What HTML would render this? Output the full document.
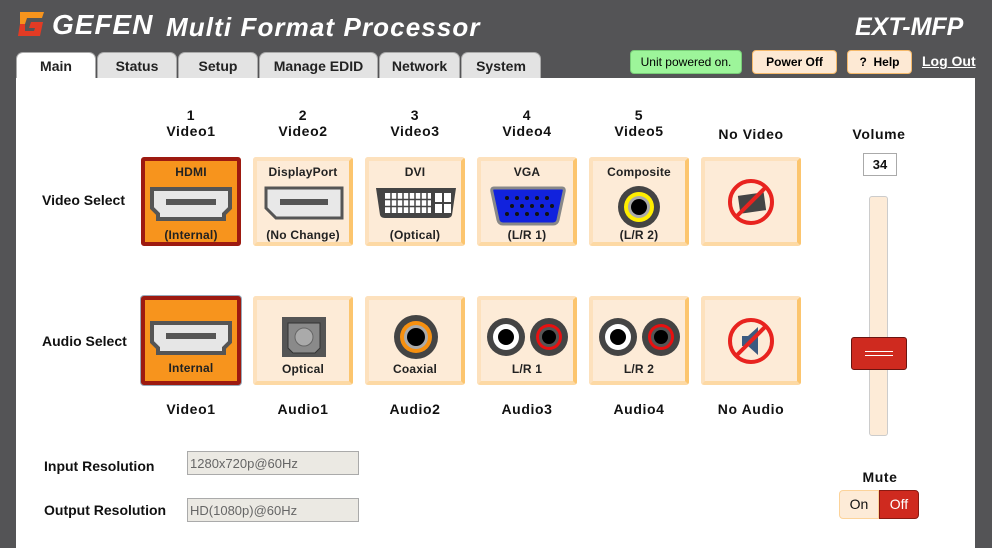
<!DOCTYPE html>
<html><head><meta charset="utf-8"><style>
*{margin:0;padding:0;box-sizing:border-box}
body{width:992px;height:541px;background:#545456;font-family:"Liberation Sans",Arial,sans-serif;position:relative;overflow:hidden}
.a{position:absolute}
.t{position:absolute;top:52px;height:26px;background:#e3e3e3;border:1px solid #aaa;border-bottom:none;border-radius:7px 7px 0 0;font:bold 14px "Liberation Sans",sans-serif;color:#222;text-align:center;line-height:26px}
.panel{position:absolute;left:16px;top:78px;width:959px;height:470px;background:#fff}
.tile{position:absolute;width:100px;height:89px;background:#fdebd7;border:4px solid #fde1bd;border-right-color:#fcc56e;border-bottom-color:#fdd9a4;border-radius:3px}
.sel{background:#f7941d;border:4px solid #9d1a10}
.tl{position:absolute;left:0;width:92px;text-align:center;font:bold 12px "Liberation Sans",sans-serif;color:#222;letter-spacing:0.2px}
.lab{position:absolute;font:bold 14px "Liberation Sans",sans-serif;color:#111;text-align:center;width:100px;letter-spacing:0.6px}
.btn{position:absolute;top:50px;height:24px;border-radius:4px;font:bold 12px "Liberation Sans",sans-serif;text-align:center;line-height:22px}
svg{position:absolute}
</style></head><body>
<svg style="left:16px;top:8px" width="32" height="32" viewBox="0 0 32 32"><path d="M4 4 H28 L26 10 H11 L9 16 L4 16 Z" fill="#f7941d"/><path d="M9 16 L4 16 L2 28 H24 L27 14 H15 L13 20 H19 L18 23 H9 Z" fill="#e33b24"/></svg>
<div class="a" style="left:52px;top:9px;font:italic bold 28px 'Liberation Sans',sans-serif;color:#fff;letter-spacing:1px">GEFEN</div>
<div class="a" style="left:166px;top:12px;font:italic bold 26px 'Liberation Sans',sans-serif;color:#fff;letter-spacing:1.1px">Multi Format Processor</div>
<div class="a" style="left:855px;top:13px;font:italic bold 25px 'Liberation Sans',sans-serif;color:#fff">EXT-MFP</div>
<div class="t" style="left:16px;width:80px;background:#fff;height:27px">Main</div>
<div class="t" style="left:97px;width:80px">Status</div>
<div class="t" style="left:178px;width:80px">Setup</div>
<div class="t" style="left:259px;width:119px">Manage EDID</div>
<div class="t" style="left:379px;width:81px">Network</div>
<div class="t" style="left:461px;width:80px">System</div>
<div class="btn" style="left:630px;width:112px;background:#9df59a;border:1px solid #7c7;font-weight:normal">Unit powered on.</div>
<div class="btn" style="left:752px;width:85px;background:#fde9d4;border:1px solid #f5b96a">Power Off</div>
<div class="btn" style="left:847px;width:65px;background:#fde9d4;border:1px solid #f5b96a">?&nbsp; Help</div>
<div class="a" style="left:922px;top:53px;font:bold 14px 'Liberation Sans',sans-serif;color:#fff;text-decoration:underline">Log Out</div>
<div class="panel"></div>

<div class="lab" style="left:141px;top:107px">1<br>Video1</div>
<div class="lab" style="left:253px;top:107px">2<br>Video2</div>
<div class="lab" style="left:365px;top:107px">3<br>Video3</div>
<div class="lab" style="left:477px;top:107px">4<br>Video4</div>
<div class="lab" style="left:589px;top:107px">5<br>Video5</div>
<div class="lab" style="left:701px;top:126px">No Video</div>
<div class="lab" style="left:829px;top:126px">Volume</div>
<div class="a" style="left:42px;top:192px;font:bold 14px 'Liberation Sans';color:#111">Video Select</div>
<div class="a" style="left:42px;top:333px;font:bold 14px 'Liberation Sans';color:#111">Audio Select</div>
<div class="lab" style="left:141px;top:401px">Video1</div>
<div class="lab" style="left:253px;top:401px">Audio1</div>
<div class="lab" style="left:365px;top:401px">Audio2</div>
<div class="lab" style="left:477px;top:401px">Audio3</div>
<div class="lab" style="left:589px;top:401px">Audio4</div>
<div class="lab" style="left:701px;top:401px">No Audio</div>

<div class="tile sel" style="left:141px;top:157px"><div class="tl" style="top:4px">HDMI</div><div class="tl" style="top:67px">(Internal)</div>
<svg style="left:4px;top:25px" width="84" height="36"><path d="M3 3 H81 V22 L75 28 V33 H9 V28 L3 22 Z" fill="#e6e6e6" stroke="#555" stroke-width="4"/><rect x="17" y="13" width="50" height="6" fill="#555"/></svg></div>
<div class="tile" style="left:253px;top:157px"><div class="tl" style="top:4px">DisplayPort</div><div class="tl" style="top:67px">(No Change)</div>
<svg style="left:7px;top:25px" width="80" height="34"><path d="M2 2 H78 V32 H12 L2 22 Z" fill="#e8e8e8" stroke="#555" stroke-width="3"/><rect x="16" y="13" width="48" height="6" fill="#555"/></svg></div>
<div class="tile" style="left:365px;top:157px"><div class="tl" style="top:4px">DVI</div><div class="tl" style="top:67px">(Optical)</div>
<svg style="left:6px;top:26px" width="82" height="32"><path d="M1 1 H81 L77 28 Q76 31 72 31 H10 Q6 31 5 28 Z" fill="#444"/><rect x="10" y="6" width="46" height="20" fill="#fff"/><g stroke="#444" stroke-width="1.5"><path d="M10 12.5H56M10 19.5H56M16 6V26M22 6V26M28 6V26M34 6V26M40 6V26M46 6V26M52 6V26"/></g><rect x="60" y="6" width="16" height="20" fill="#fff"/><path d="M68 6V26M60 16H76" stroke="#444" stroke-width="2"/></svg></div>
<div class="tile" style="left:477px;top:157px"><div class="tl" style="top:4px">VGA</div><div class="tl" style="top:67px">(L/R 1)</div>
<svg style="left:9px;top:25px" width="76" height="40"><path d="M4 2 H72 Q75 2 74 6 L68 34 Q67 38 63 38 H13 Q9 38 8 34 L2 6 Q1 2 4 2 Z" fill="#1122dd" stroke="#888" stroke-width="3"/><g fill="#111"><circle cx="17" cy="12" r="2"/><circle cx="27" cy="12" r="2"/><circle cx="37" cy="12" r="2"/><circle cx="47" cy="12" r="2"/><circle cx="57" cy="12" r="2"/><circle cx="22" cy="20" r="2"/><circle cx="32" cy="20" r="2"/><circle cx="42" cy="20" r="2"/><circle cx="52" cy="20" r="2"/><circle cx="62" cy="20" r="2"/><circle cx="17" cy="28" r="2"/><circle cx="27" cy="28" r="2"/><circle cx="37" cy="28" r="2"/><circle cx="47" cy="28" r="2"/><circle cx="57" cy="28" r="2"/></g></svg></div>
<div class="tile" style="left:589px;top:157px"><div class="tl" style="top:4px">Composite</div><div class="tl" style="top:67px">(L/R 2)</div>
<svg style="left:24px;top:24px" width="44" height="44"><circle cx="22" cy="22" r="21" fill="#444"/><circle cx="22" cy="22" r="15" fill="#ffee00"/><circle cx="22" cy="22" r="11" fill="#aaa"/><circle cx="22" cy="22" r="8" fill="#000"/></svg></div>
<div class="tile" style="left:701px;top:157px">
<svg style="left:22px;top:17px" width="48" height="48"><rect x="12" y="16" width="26" height="18" fill="#444" transform="rotate(-8 25 25)"/><circle cx="24" cy="24" r="21" fill="none" stroke="#e8231f" stroke-width="4"/><path d="M9 39 L39 9" stroke="#e8231f" stroke-width="4"/></svg></div>

<div class="tile sel" style="left:141px;top:296px;box-shadow:0 0 0 1px #9ab"><div class="tl" style="top:61px">Internal</div>
<svg style="left:4px;top:20px" width="84" height="36"><path d="M3 3 H81 V22 L75 28 V33 H9 V28 L3 22 Z" fill="#e6e6e6" stroke="#555" stroke-width="4"/><rect x="17" y="13" width="50" height="6" fill="#555"/></svg></div>
<div class="tile" style="left:253px;top:296px"><div class="tl" style="top:62px">Optical</div>
<svg style="left:24px;top:16px" width="46" height="42"><rect x="1" y="1" width="44" height="40" fill="#555"/><path d="M7 7H39V32L34 37H12L7 32Z" fill="#8a8a8a" stroke="#333"/><circle cx="23" cy="21" r="9" fill="#aaa" stroke="#666"/></svg></div>
<div class="tile" style="left:365px;top:296px"><div class="tl" style="top:62px">Coaxial</div>
<svg style="left:24px;top:14px" width="46" height="46"><circle cx="23" cy="23" r="22" fill="#444"/><circle cx="23" cy="23" r="16" fill="#f7900f"/><circle cx="23" cy="23" r="12" fill="#aaa"/><circle cx="23" cy="23" r="9" fill="#000"/></svg></div>
<div class="tile" style="left:477px;top:296px"><div class="tl" style="top:62px">L/R 1</div>
<svg style="left:6px;top:17px" width="82" height="40"><circle cx="19" cy="20" r="19" fill="#444"/><circle cx="19" cy="20" r="13" fill="#fff"/><circle cx="19" cy="20" r="8" fill="#000"/><circle cx="62" cy="20" r="19" fill="#444"/><circle cx="62" cy="20" r="13" fill="#e81010"/><circle cx="62" cy="20" r="10" fill="#555"/><circle cx="62" cy="20" r="7" fill="#000"/></svg></div>
<div class="tile" style="left:589px;top:296px"><div class="tl" style="top:62px">L/R 2</div>
<svg style="left:6px;top:17px" width="82" height="40"><circle cx="19" cy="20" r="19" fill="#444"/><circle cx="19" cy="20" r="13" fill="#fff"/><circle cx="19" cy="20" r="8" fill="#000"/><circle cx="62" cy="20" r="19" fill="#444"/><circle cx="62" cy="20" r="13" fill="#e81010"/><circle cx="62" cy="20" r="10" fill="#555"/><circle cx="62" cy="20" r="7" fill="#000"/></svg></div>
<div class="tile" style="left:701px;top:296px">
<svg style="left:22px;top:17px" width="48" height="48"><path d="M15 19H21L31 10V38L21 29H15Z" fill="#3c5a80"/><circle cx="24" cy="24" r="21" fill="none" stroke="#e8231f" stroke-width="4"/><path d="M9 39 L39 9" stroke="#e8231f" stroke-width="4"/></svg></div>

<div class="a" style="left:863px;top:153px;width:34px;height:23px;border:1px solid #aaa;font:bold 13px 'Liberation Sans';text-align:center;line-height:21px;color:#111">34</div>
<div class="a" style="left:869px;top:196px;width:19px;height:240px;background:#fdebd7;border:1px solid #ccc;border-radius:3px"></div>
<div class="a" style="left:851px;top:337px;width:56px;height:33px;background:#cf2a1f;border:1px solid #6a1410;border-radius:3px"><div class="a" style="left:13px;top:13px;width:28px;height:5px;border-top:1px solid #fff;border-bottom:1px solid #fff"></div></div>

<div class="a" style="left:44px;top:458px;font:bold 14px 'Liberation Sans';color:#111">Input Resolution</div>
<div class="a" style="left:44px;top:502px;font:bold 14px 'Liberation Sans';color:#111">Output Resolution</div>
<div class="a" style="left:187px;top:451px;width:172px;height:24px;background:#ebe9e3;border:1px solid #aaa;font:13px 'Liberation Sans';color:#666;padding:4px 2px">1280x720p@60Hz</div>
<div class="a" style="left:187px;top:498px;width:172px;height:24px;background:#ebe9e3;border:1px solid #aaa;font:13px 'Liberation Sans';color:#666;padding:4px 2px">HD(1080p)@60Hz</div>

<div class="lab" style="left:830px;top:469px">Mute</div>
<div class="a" style="left:839px;top:490px;width:40px;height:29px;background:#fdebd7;border:1px solid #fcd39a;border-radius:4px 0 0 4px;font:14px 'Liberation Sans';text-align:center;line-height:27px;color:#111">On</div>
<div class="a" style="left:879px;top:490px;width:40px;height:29px;background:#cf2a1f;border:1px solid #8a1a12;border-radius:0 4px 4px 0;font:14px 'Liberation Sans';text-align:center;line-height:27px;color:#fff">Off</div>
</body></html>
